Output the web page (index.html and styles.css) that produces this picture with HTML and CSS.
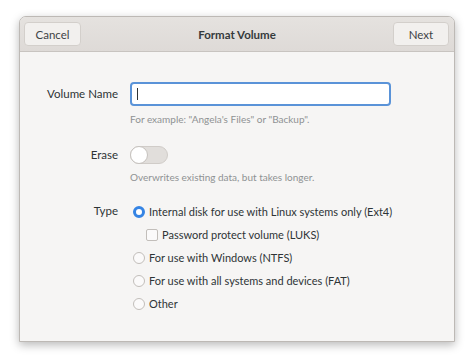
FILE: index.html
```html
<!DOCTYPE html>
<html lang="en">

<head>
    <meta charset="UTF-8">
    <meta name="viewport" content="width=device-width, initial-scale=1.0">
    <title>Format Volume</title>
    <link rel="stylesheet" href="styles.css">
</head>

<body>
    <div class="dialog">
        <div class="headerbar">
            <button class="btn">Cancel</button>
            <span class="title">Format Volume</span>
            <button class="btn">Next</button>
        </div>

        <div class="content">
            <div class="row">
                <label class="label" for="volumeName">Volume Name</label>
                <div class="field">
                    <div class="entry"><span class="caret"></span></div>
                    <div class="hint">For example: "Angela's Files" or "Backup".</div>
                </div>
            </div>

            <div class="row row-erase">
                <span class="label">Erase</span>
                <div class="field">
                    <div class="switch"><span class="knob"></span></div>
                    <div class="hint">Overwrites existing data, but takes longer.</div>
                </div>
            </div>

            <div class="row row-type">
                <span class="label">Type</span>
                <div class="field options">
                    <div class="option"><span class="radio checked"></span>Internal disk for use with Linux systems only (Ext4)</div>
                    <div class="option sub"><span class="check"></span>Password protect volume (LUKS)</div>
                    <div class="option"><span class="radio"></span>For use with Windows (NTFS)</div>
                    <div class="option"><span class="radio"></span>For use with all systems and devices (FAT)</div>
                    <div class="option"><span class="radio"></span>Other</div>
                </div>
            </div>
        </div>
    </div>
</body>

</html>
```

FILE: styles.css
```css
body {
    margin: 0;
    padding: 16px 19px;
    background: #ffffff;
    font-family: Lato, "Noto Sans", sans-serif;
    font-size: 11px;
    color: #2e3436;
}

.dialog {
    width: 436px;
    height: 326px;
    box-sizing: border-box;
    background: #f6f5f4;
    border: 1px solid #bdb9b5;
    border-radius: 7px 7px 0 0;
    box-shadow: 0 3px 10px rgba(0, 0, 0, 0.28);
    overflow: hidden;
}

.headerbar {
    height: 35px;
    box-sizing: border-box;
    display: flex;
    align-items: center;
    justify-content: space-between;
    padding: 0 5px 0 4px;
    background: linear-gradient(#e5e2df, #dedad7);
    border-bottom: 1px solid #c8c4c0;
}

.btn {
    height: 24px;
    padding: 0;
    font-family: inherit;
    font-size: 11.5px;
    color: #3d4345;
    background: #f2f0ee;
    border: 1px solid #d3cfcb;
    border-radius: 4px;
}

.btn:first-child {
    width: 57px;
}

.btn:last-child {
    width: 56px;
}

.title {
    font-size: 11.5px;
    font-weight: bold;
    color: #353a3c;
}

.content {
    padding-top: 30px;
}

.row {
    display: grid;
    grid-template-columns: 98px 1fr;
    column-gap: 12px;
}

.label {
    text-align: right;
    line-height: 24px;
    font-size: 11.5px;
    color: #2e3436;
}

.entry {
    width: 261px;
    height: 24px;
    box-sizing: border-box;
    background: #ffffff;
    border: 2px solid #5a93d8;
    border-radius: 4px;
    padding: 4px 5px;
}

.caret {
    display: block;
    width: 1px;
    height: 12px;
    background: #2e3436;
}

.hint {
    font-size: 10px;
    color: #8f9293;
    margin-top: 7px;
}

.row-erase {
    margin-top: 21px;
}

.row-erase .label {
    line-height: 18px;
}

.switch {
    width: 38px;
    height: 18px;
    box-sizing: border-box;
    border-radius: 9px;
    background: #e1dedb;
    border: 1px solid #d0ccc8;
    position: relative;
}

.knob {
    position: absolute;
    top: -1px;
    left: -1px;
    width: 18px;
    height: 18px;
    box-sizing: border-box;
    border-radius: 50%;
    background: #ffffff;
    border: 1px solid #c6c2be;
}

.row-type {
    margin-top: 17px;
}

.row-type .label {
    line-height: 23px;
    margin-top: -1px;
}

.options {
    display: flex;
    flex-direction: column;
    margin-left: 3px;
}

.option {
    display: flex;
    align-items: center;
    height: 23px;
    gap: 4px;
}

.option.sub {
    margin-left: 13px;
}

.radio {
    width: 12px;
    height: 12px;
    box-sizing: border-box;
    border-radius: 50%;
    border: 1px solid #c2beba;
    background: #fbfafa;
}

.radio.checked {
    border: 3px solid #3584e4;
    background: #ffffff;
}

.check {
    width: 12px;
    height: 12px;
    box-sizing: border-box;
    border-radius: 2px;
    border: 1px solid #c2beba;
    background: #fbfafa;
}
```
